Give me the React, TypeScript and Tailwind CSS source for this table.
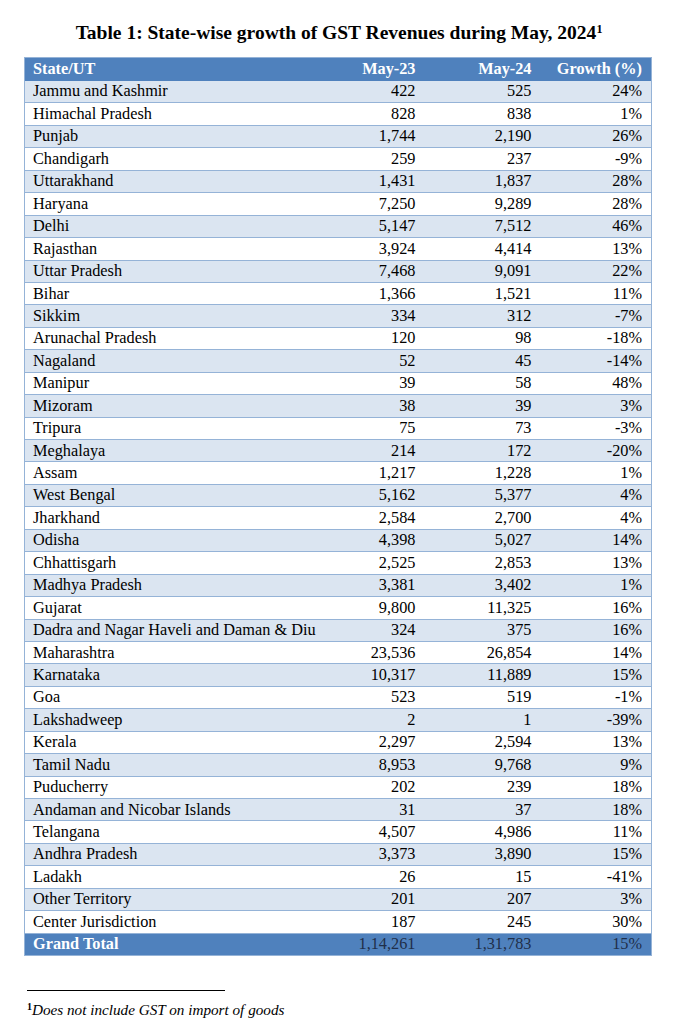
import React from "react";

// State-wise GST revenue table (May 2024)
const rows: [string, string, string, string][] = [
  ["Jammu and Kashmir", "422", "525", "24%"],
  ["Himachal Pradesh", "828", "838", "1%"],
  ["Punjab", "1,744", "2,190", "26%"],
  ["Chandigarh", "259", "237", "-9%"],
  ["Uttarakhand", "1,431", "1,837", "28%"],
  ["Haryana", "7,250", "9,289", "28%"],
  ["Delhi", "5,147", "7,512", "46%"],
  ["Rajasthan", "3,924", "4,414", "13%"],
  ["Uttar Pradesh", "7,468", "9,091", "22%"],
  ["Bihar", "1,366", "1,521", "11%"],
  ["Sikkim", "334", "312", "-7%"],
  ["Arunachal Pradesh", "120", "98", "-18%"],
  ["Nagaland", "52", "45", "-14%"],
  ["Manipur", "39", "58", "48%"],
  ["Mizoram", "38", "39", "3%"],
  ["Tripura", "75", "73", "-3%"],
  ["Meghalaya", "214", "172", "-20%"],
  ["Assam", "1,217", "1,228", "1%"],
  ["West Bengal", "5,162", "5,377", "4%"],
  ["Jharkhand", "2,584", "2,700", "4%"],
  ["Odisha", "4,398", "5,027", "14%"],
  ["Chhattisgarh", "2,525", "2,853", "13%"],
  ["Madhya Pradesh", "3,381", "3,402", "1%"],
  ["Gujarat", "9,800", "11,325", "16%"],
  ["Dadra and Nagar Haveli and Daman & Diu", "324", "375", "16%"],
  ["Maharashtra", "23,536", "26,854", "14%"],
  ["Karnataka", "10,317", "11,889", "15%"],
  ["Goa", "523", "519", "-1%"],
  ["Lakshadweep", "2", "1", "-39%"],
  ["Kerala", "2,297", "2,594", "13%"],
  ["Tamil Nadu", "8,953", "9,768", "9%"],
  ["Puducherry", "202", "239", "18%"],
  ["Andaman and Nicobar Islands", "31", "37", "18%"],
  ["Telangana", "4,507", "4,986", "11%"],
  ["Andhra Pradesh", "3,373", "3,890", "15%"],
  ["Ladakh", "26", "15", "-41%"],
  ["Other Territory", "201", "207", "3%"],
  ["Center Jurisdiction", "187", "245", "30%"],
];

export default function App() {
  return (
    <div className="min-h-screen bg-white text-black font-['Liberation_Serif','Times_New_Roman',serif]">
      <h1 className="pt-[21px] mb-[12px] h-[45px] text-center text-[19.5px] leading-[24px] font-bold">
        Table 1: State-wise growth of GST Revenues during May, 2024
        <sup className="text-[12px] font-bold">1</sup>
      </h1>

      <table className="ml-[24px] w-[627px] table-fixed border-collapse border border-[#95b3d7] text-[16.3px]">
        <colgroup>
          <col className="w-[300px]" />
          <col className="w-[100px]" />
          <col className="w-[116px]" />
          <col className="w-[111px]" />
        </colgroup>
        <thead>
          <tr className="h-[23px] bg-[#4f81bd] text-white font-bold leading-none">
            <th className="pl-[8px] text-left font-bold">State/UT</th>
            <th className="pr-[9px] text-right font-bold">May-23</th>
            <th className="pr-[9px] text-right font-bold">May-24</th>
            <th className="pr-[9px] text-right font-bold">Growth (%)</th>
          </tr>
        </thead>
        <tbody>
          {rows.map((r, i) => (
            <tr
              key={r[0]}
              className={`h-[22.45px] leading-none border-b border-[#95b3d7] ${i % 2 === 0 ? "bg-[#dbe5f1]" : "bg-white"}`}
            >
              <td className="pl-[8px] whitespace-nowrap overflow-hidden">{r[0]}</td>
              <td className="pr-[9px] text-right">{r[1]}</td>
              <td className="pr-[9px] text-right">{r[2]}</td>
              <td className="pr-[9px] text-right">{r[3]}</td>
            </tr>
          ))}
          <tr className="h-[22.45px] leading-none bg-[#4f81bd]">
            <td className="pl-[8px] text-white font-bold">Grand Total</td>
            <td className="pr-[9px] text-right text-[#1f2f4a]">1,14,261</td>
            <td className="pr-[9px] text-right text-[#1f2f4a]">1,31,783</td>
            <td className="pr-[9px] text-right text-[#1f2f4a]">15%</td>
          </tr>
        </tbody>
      </table>

      <div className="ml-[27px] mt-[34px] w-[198px] border-t-[1.5px] border-black" />
      <p className="ml-[27px] mt-[9px] text-[15.2px] leading-[20px]">
        <sup className="font-bold not-italic text-[10px]">1</sup>
        <span className="italic">Does not include GST on import of goods</span>
      </p>
    </div>
  );
}
